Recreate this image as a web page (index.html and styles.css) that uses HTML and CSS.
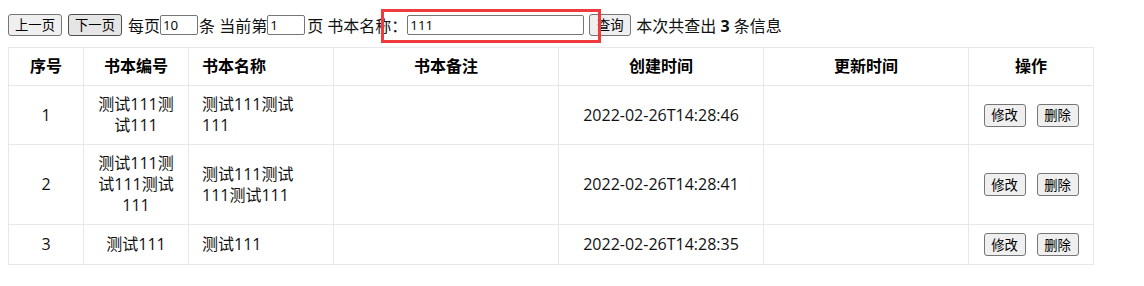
FILE: index.html
```html
<!DOCTYPE html>
<html>
<head>
  <meta charset="UTF-8">
  <title>书本列表</title>
  <link rel="stylesheet" href="styles.css">
</head>
<body>
  <div class="toolbar">
    <button class="btn">上一页</button>
    <button class="btn btn-active">下一页</button>
    <span class="label">每页</span>
    <input class="field field-small" type="text" value="10">
    <span class="label label-gap">条 当前第</span>
    <input class="field field-small" type="text" value="1">
    <span class="label label-name">页 书本名称：</span>
    <input class="field field-name" type="text" value="111">
    <button class="btn btn-query">查询</button>
    <span class="label label-sum">本次共查出 <b>3</b> 条信息</span>
    <!-- 高亮框 -->
    <div class="highlight"></div>
  </div>

  <table class="book-table">
    <colgroup>
      <col style="width: 75px">
      <col style="width: 105px">
      <col style="width: 145px">
      <col style="width: 225px">
      <col style="width: 205px">
      <col style="width: 205px">
      <col style="width: 125px">
    </colgroup>
    <thead>
      <tr>
        <th>序号</th>
        <th>书本编号</th>
        <th class="col-name">书本名称</th>
        <th>书本备注</th>
        <th>创建时间</th>
        <th>更新时间</th>
        <th>操作</th>
      </tr>
    </thead>
    <tbody>
      <tr>
        <td>1</td>
        <td>测试111测试111</td>
        <td class="col-name">测试111测试111</td>
        <td></td>
        <td>2022-02-26T14:28:46</td>
        <td></td>
        <td class="col-op"><button class="btn btn-op">修改</button><button class="btn btn-op">删除</button></td>
      </tr>
      <tr>
        <td>2</td>
        <td>测试111测试111测试111</td>
        <td class="col-name">测试111测试111测试111</td>
        <td></td>
        <td>2022-02-26T14:28:41</td>
        <td></td>
        <td class="col-op"><button class="btn btn-op">修改</button><button class="btn btn-op">删除</button></td>
      </tr>
      <tr>
        <td>3</td>
        <td>测试111</td>
        <td class="col-name">测试111</td>
        <td></td>
        <td>2022-02-26T14:28:35</td>
        <td></td>
        <td class="col-op"><button class="btn btn-op">修改</button><button class="btn btn-op">删除</button></td>
      </tr>
    </tbody>
  </table>
</body>
</html>
```

FILE: styles.css
```css
body {
  margin: 8px;
  font-family: "Open Sans", "Noto Sans CJK SC", sans-serif;
  font-size: 16px;
  color: #111;
}
.toolbar {
  position: relative;
  display: flex;
  align-items: center;
  height: 22px;
  margin-top: 6px;
}
.btn {
  height: 22px;
  padding: 1px 6px;
  font-family: "Open Sans", "Noto Sans CJK SC", sans-serif;
  font-size: 13.33px;
  line-height: 18px;
  color: #000;
  background-color: #efefef;
  border: 1px solid #767676;
  border-radius: 3px;
  box-sizing: border-box;
}
.btn + .btn {
  margin-left: 6px;
}
.btn-active {
  background-color: #e5e5e5;
  border-color: #4f4f4f;
}
.label {
  white-space: pre;
}
.toolbar > .label:first-of-type {
  margin-left: 6px;
}
.label-gap {
  margin-left: 1px;
}
.label-name {
  margin-left: 2px;
}
.label-sum {
  margin-left: 5px;
}
.field {
  height: 20px;
  padding: 1px 2px;
  font-family: "Open Sans", "Noto Sans CJK SC", sans-serif;
  font-size: 13.33px;
  color: #000;
  border: 1px solid #767676;
  border-radius: 2px;
  box-sizing: border-box;
}
.field-small {
  width: 38px;
}
.field-name {
  width: 177px;
}
.btn-query {
  width: 42px;
  margin-left: 5px;
  padding: 1px 0;
}
.highlight {
  position: absolute;
  left: 373px;
  top: -5px;
  width: 220px;
  height: 34px;
  border: 3px solid #ef3b3d;
  box-sizing: border-box;
  pointer-events: none;
}
.book-table {
  width: 1085px;
  margin-top: 11px;
  table-layout: fixed;
  border-collapse: collapse;
}
.book-table th,
.book-table td {
  padding: 8px 12px;
  line-height: 21px;
  text-align: center;
  vertical-align: middle;
  border: 1px solid #e8e8e8;
}
.book-table th {
  font-weight: bold;
  color: #000;
}
.book-table .col-name {
  text-align: left;
  padding-left: 13px;
  padding-right: 30px;
}
.book-table .col-op {
  padding: 8px 0;
  white-space: nowrap;
}
.btn-op {
  width: 42px;
  height: 23px;
  padding: 1px 0;
  vertical-align: middle;
}
.btn-op + .btn-op {
  margin-left: 11px;
}
```
